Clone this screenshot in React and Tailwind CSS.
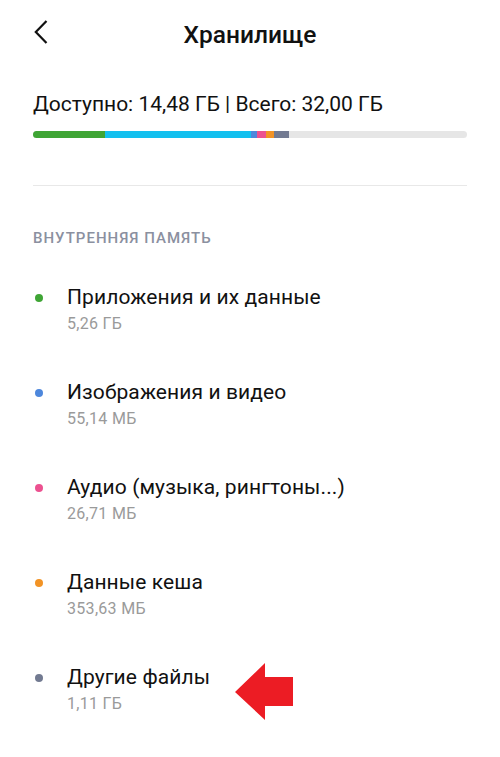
const SEGMENTS = [
  { color: "bg-[#3fa535]", width: 72 },
  { color: "bg-[#13c0ef]", width: 146 },
  { color: "bg-[#4d87dc]", width: 6 },
  { color: "bg-[#ec5190]", width: 9 },
  { color: "bg-[#f29325]", width: 8 },
  { color: "bg-[#727a91]", width: 15 },
]

const ITEMS = [
  { dot: "bg-[#3fa535]", title: "Приложения и их данные", size: "5,26 ГБ" },
  { dot: "bg-[#4d87dc]", title: "Изображения и видео", size: "55,14 МБ" },
  { dot: "bg-[#ec5190]", title: "Аудио (музыка, рингтоны...)", size: "26,71 МБ" },
  { dot: "bg-[#f29325]", title: "Данные кеша", size: "353,63 МБ" },
  { dot: "bg-[#727a91]", title: "Другие файлы", size: "1,11 ГБ", arrow: true },
]

function RedArrow() {
  return (
    <svg width="58" height="57" viewBox="0 0 58 57" className="absolute left-[168px] top-[-1px]">
      <polygon points="0,29 30,0 30,14 58,14 58,43 30,43 30,57" fill="#ec1c24" />
    </svg>
  )
}

export default function App() {
  return (
    <div className="w-[500px] h-[757px] bg-white overflow-hidden font-['Roboto',sans-serif] text-[#111]">
      <div className="relative h-[70px] flex items-center justify-center">
        <svg width="14" height="24" viewBox="0 0 14 24" className="absolute left-[34px] top-[20px]">
          <path d="M12.5 1 L1.8 12 L12.5 23" fill="none" stroke="#111" strokeWidth="2.2" />
        </svg>
        <h1 className="text-[24.5px] leading-[30px] font-medium">Хранилище</h1>
      </div>

      <div className="px-[33px]">
        <p className="mt-[20px] text-[21px] leading-[28px]">Доступно: 14,48 ГБ | Всего: 32,00 ГБ</p>
        <div className="mt-[13px] h-[7px] rounded-full bg-[#e6e6e6] overflow-hidden flex">
          {SEGMENTS.map((s, i) => (
            <div key={i} className={`h-full ${s.color}`} style={{ width: s.width }} />
          ))}
        </div>
        <div className="mt-[47px] h-px bg-[#e8e8e8]" />

        <p className="mt-[42px] text-[15px] leading-[20px] font-medium text-[#8b90a0] tracking-[1px]">ВНУТРЕННЯЯ ПАМЯТЬ</p>

        <div className="mt-[36px] flex flex-col gap-[45px]">
          {ITEMS.map((it, i) => (
            <div key={i} className="flex items-start">
              <div className={`mt-[10px] ml-[2px] w-[8px] h-[8px] rounded-full ${it.dot}`} />
              <div className="relative ml-[24px]">
                <div className="text-[21px] leading-[26px] tracking-[0.1px]">{it.title}</div>
                <div className="mt-[4px] text-[16px] leading-[20px] text-[#9a9a9a] tracking-[0.3px]">{it.size}</div>
                {it.arrow && <RedArrow />}
              </div>
            </div>
          ))}
        </div>
      </div>
    </div>
  )
}
